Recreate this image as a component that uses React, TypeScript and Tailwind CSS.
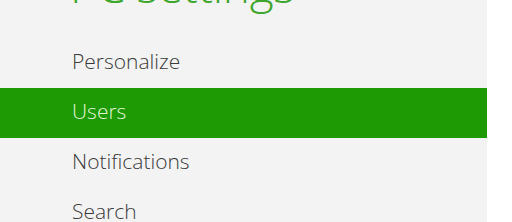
const items = ['Personalize', 'Users', 'Notifications', 'Search'];

const App = () => {
  return (
    <div
      className="flex w-[512px] h-[222px] overflow-hidden bg-white"
      style={{ fontFamily: '"Open Sans", "Noto Sans", sans-serif' }}
    >
      <div className="w-[487px] h-full bg-[#f3f3f3] flex flex-col">
        <div className="h-[38px] shrink-0 overflow-hidden pl-[70px]">
          <div className="text-[46px] leading-none font-light text-[#3da62c] mt-[-38px] tracking-[-0.3px]">
            PC settings
          </div>
        </div>
        {items.map((item) => (
          <div
            key={item}
            className={`h-[50px] shrink-0 flex items-center pl-[72px] pb-[2px] text-[21px] font-light ${
              item === 'Users' ? 'bg-[#1e9a05] text-[#e2f7d6]' : 'text-[#3a3a3a]'
            }`}
          >
            {item}
          </div>
        ))}
      </div>
      <div className="flex-1 bg-white" />
    </div>
  );
};

export default App;
